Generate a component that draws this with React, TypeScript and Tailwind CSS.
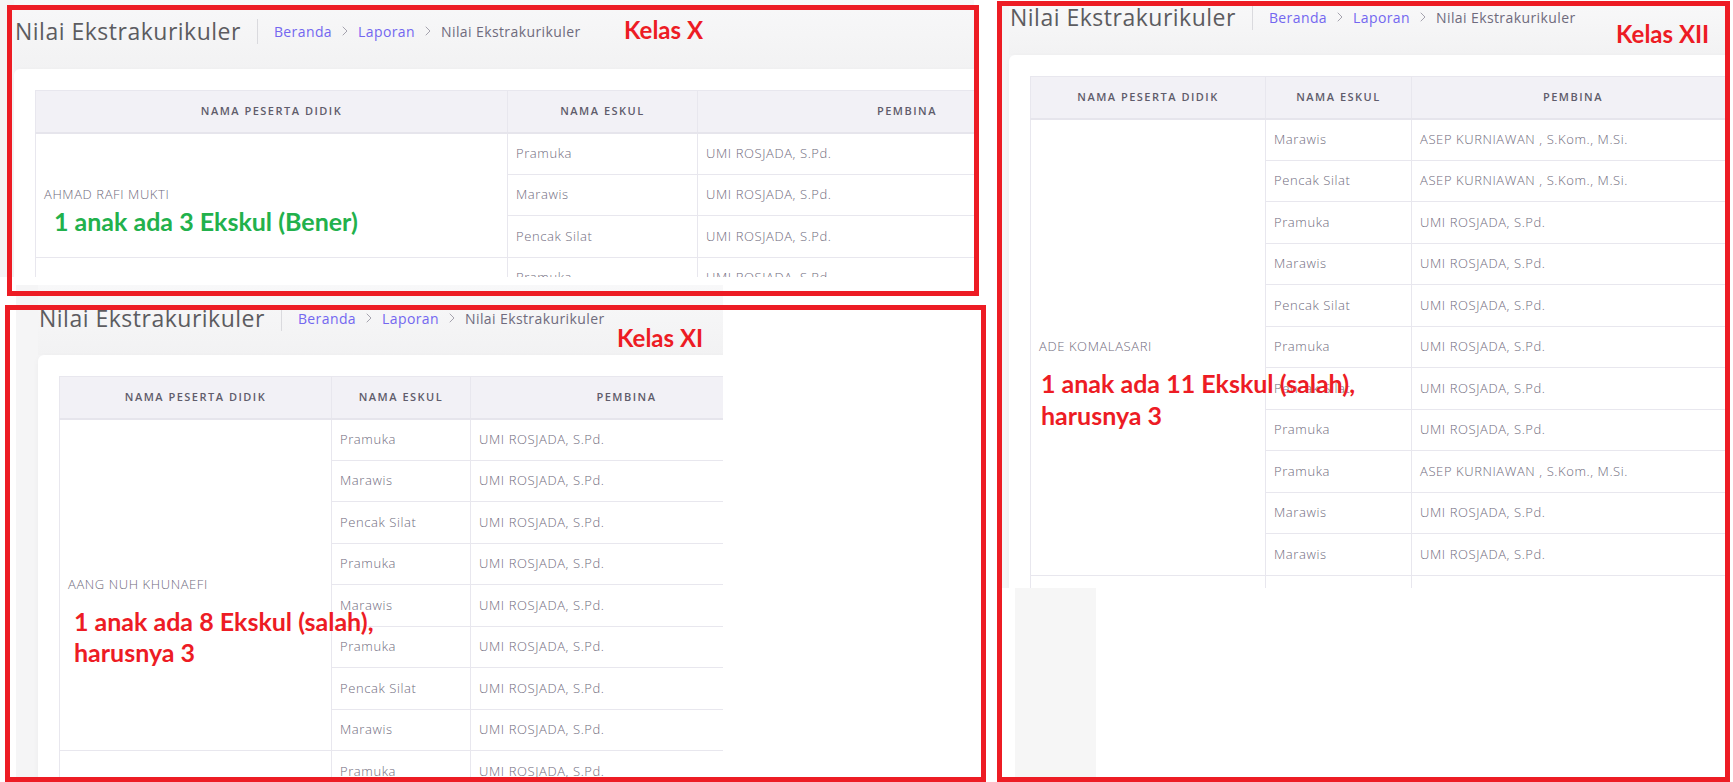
import { ChevronRight } from "lucide-react";

type Row = { eskul: string; pembina: string };

const UMI = "UMI ROSJADA, S.Pd.";
const ASEP = "ASEP KURNIAWAN , S.Kom., M.Si.";

const kelasX: Row[] = [
  { eskul: "Pramuka", pembina: UMI },
  { eskul: "Marawis", pembina: UMI },
  { eskul: "Pencak Silat", pembina: UMI },
];

const kelasXI: Row[] = [
  { eskul: "Pramuka", pembina: UMI },
  { eskul: "Marawis", pembina: UMI },
  { eskul: "Pencak Silat", pembina: UMI },
  { eskul: "Pramuka", pembina: UMI },
  { eskul: "Marawis", pembina: UMI },
  { eskul: "Pramuka", pembina: UMI },
  { eskul: "Pencak Silat", pembina: UMI },
  { eskul: "Marawis", pembina: UMI },
];

const kelasXII: Row[] = [
  { eskul: "Marawis", pembina: ASEP },
  { eskul: "Pencak Silat", pembina: ASEP },
  { eskul: "Pramuka", pembina: UMI },
  { eskul: "Marawis", pembina: UMI },
  { eskul: "Pencak Silat", pembina: UMI },
  { eskul: "Pramuka", pembina: UMI },
  { eskul: "Pencak Silat", pembina: UMI },
  { eskul: "Pramuka", pembina: UMI },
  { eskul: "Pramuka", pembina: ASEP },
  { eskul: "Marawis", pembina: UMI },
  { eskul: "Marawis", pembina: UMI },
];

type ShotProps = {
  box: string;
  head: string;
  line: string;
  cols: [string, string, string];
  student: string;
  rows: Row[];
  next: Row;
};

const cell = "border border-[#e8e7ee] px-2 h-[41.5px] align-middle";
const th =
  "border border-[#e8e7ee] border-b-2 border-b-[#e6e5ec] h-[42px] text-center text-[11px] font-semibold uppercase tracking-[1.5px] text-[#5f5c6b]";

function Shot({ box, head, line, cols, student, rows, next }: ShotProps) {
  return (
    <div className={`overflow-hidden bg-[#f5f5f6] font-['Open_Sans',sans-serif] ${box}`}>
      <div className={`bg-gradient-to-b from-[#f8f8f9] to-[#f2f2f3] ${head}`}>
        <div className={`flex items-center ${line}`}>
          <h4 className="pl-px text-[23px] leading-8 tracking-[0.5px] text-[#5c5c60]">
            Nilai Ekstrakurikuler
          </h4>
          <span className="mx-4 h-[25px] w-px bg-[#dadade]" />
          <nav className="flex items-center text-[14px] tracking-[0.4px]">
            <span className="text-[#7367f0]">Beranda</span>
            <ChevronRight className="mx-[5px] h-4 w-4 text-[#a5a3ae]" strokeWidth={1.5} />
            <span className="text-[#7367f0]">Laporan</span>
            <ChevronRight className="mx-[5px] h-4 w-4 text-[#a5a3ae]" strokeWidth={1.5} />
            <span className="text-[#6f6b7d]">Nilai Ekstrakurikuler</span>
          </nav>
        </div>
      </div>
      <div className="w-max rounded-md bg-white p-[21px] shadow-[0_2px_6px_rgba(0,0,0,0.04)]">
        <table className="table-fixed border-collapse text-[13px] font-light tracking-[0.6px] text-[#6f6b7d]">
          <colgroup>
            <col className={cols[0]} />
            <col className={cols[1]} />
            <col className={cols[2]} />
          </colgroup>
          <thead>
            <tr className="bg-[#f2f1f6]">
              <th className={th}>Nama Peserta Didik</th>
              <th className={th}>Nama Eskul</th>
              <th className={th}>Pembina</th>
            </tr>
          </thead>
          <tbody>
            {rows.map((r, i) => (
              <tr key={i}>
                {i === 0 && (
                  <td rowSpan={rows.length} className={cell}>
                    {student}
                  </td>
                )}
                <td className={cell}>{r.eskul}</td>
                <td className={cell}>{r.pembina}</td>
              </tr>
            ))}
            <tr>
              <td className={cell} />
              <td className={cell}>{next.eskul}</td>
              <td className={cell}>{next.pembina}</td>
            </tr>
          </tbody>
        </table>
      </div>
    </div>
  );
}

const label = "pointer-events-none absolute font-['Lato',sans-serif] text-[24px] font-bold whitespace-nowrap leading-none";
const note = "pointer-events-none absolute font-['Lato',sans-serif] text-[25px] font-bold whitespace-nowrap";

export default function App() {
  return (
    <div className="flex h-[782px] w-[1733px] overflow-hidden bg-white">
      <div className="relative w-[997px] shrink-0">
        <Shot
          box="h-[277px] w-[974px] pl-[14px]"
          head="h-[69px]"
          line="h-[62px]"
          cols={["w-[472px]", "w-[190px]", "w-[419px]"]}
          student="AHMAD RAFI MUKTI"
          rows={kelasX}
          next={{ eskul: "Pramuka", pembina: UMI }}
        />
        <div className="h-2" />
        <Shot
          box="ml-[16px] h-[497px] w-[707px] pl-[22px]"
          head="h-[70px]"
          line="h-[66px]"
          cols={["w-[272px]", "w-[139px]", "w-[312px]"]}
          student="AANG NUH KHUNAEFI"
          rows={kelasXI}
          next={{ eskul: "Pramuka", pembina: UMI }}
        />

        <div className="pointer-events-none absolute left-[7px] top-[5px] h-[291px] w-[972px] border-[5px] border-[#ed1c24]" />
        <div className="pointer-events-none absolute left-[5px] top-[305px] h-[477px] w-[981px] border-[5px] border-[#ed1c24]" />

        <span className={`${label} left-[624px] top-[18px] text-[#ed1c24]`}>Kelas X</span>
        <span className={`${note} left-[54px] top-[209px] leading-none text-[#22b14c]`}>
          1 anak ada 3 Ekskul (Bener)
        </span>
        <span className={`${label} left-[617px] top-[326px] text-[#ed1c24]`}>Kelas XI</span>
        <div className={`${note} left-[74px] top-[606px] leading-[31px] text-[#ed1c24]`}>
          1 anak ada 8 Ekskul (salah),
          <br />
          harusnya 3
        </div>
      </div>

      <div className="w-[733px] shrink-0 pt-px">
        <div className="relative flex h-[781px] flex-col border-[5px] border-[#ed1c24]">
          <Shot
            box="h-[582px] w-[723px] pl-[7px]"
            head="h-[49px]"
            line="h-[22px]"
            cols={["w-[235px]", "w-[146px]", "w-[323px]"]}
            student="ADE KOMALASARI"
            rows={kelasXII}
            next={{ eskul: "Pramuka", pembina: UMI }}
          />
          <div className="ml-[13px] h-[189px] w-[81px] bg-[#f6f6f6]" />

          <span className={`${label} left-[614px] top-[16px] text-[#ed1c24]`}>Kelas XII</span>
          <div className={`${note} left-[39px] top-[361px] leading-[32px] text-[#ed1c24]`}>
            1 anak ada 11 Ekskul (salah),
            <br />
            harusnya 3
          </div>
        </div>
      </div>
    </div>
  );
}
